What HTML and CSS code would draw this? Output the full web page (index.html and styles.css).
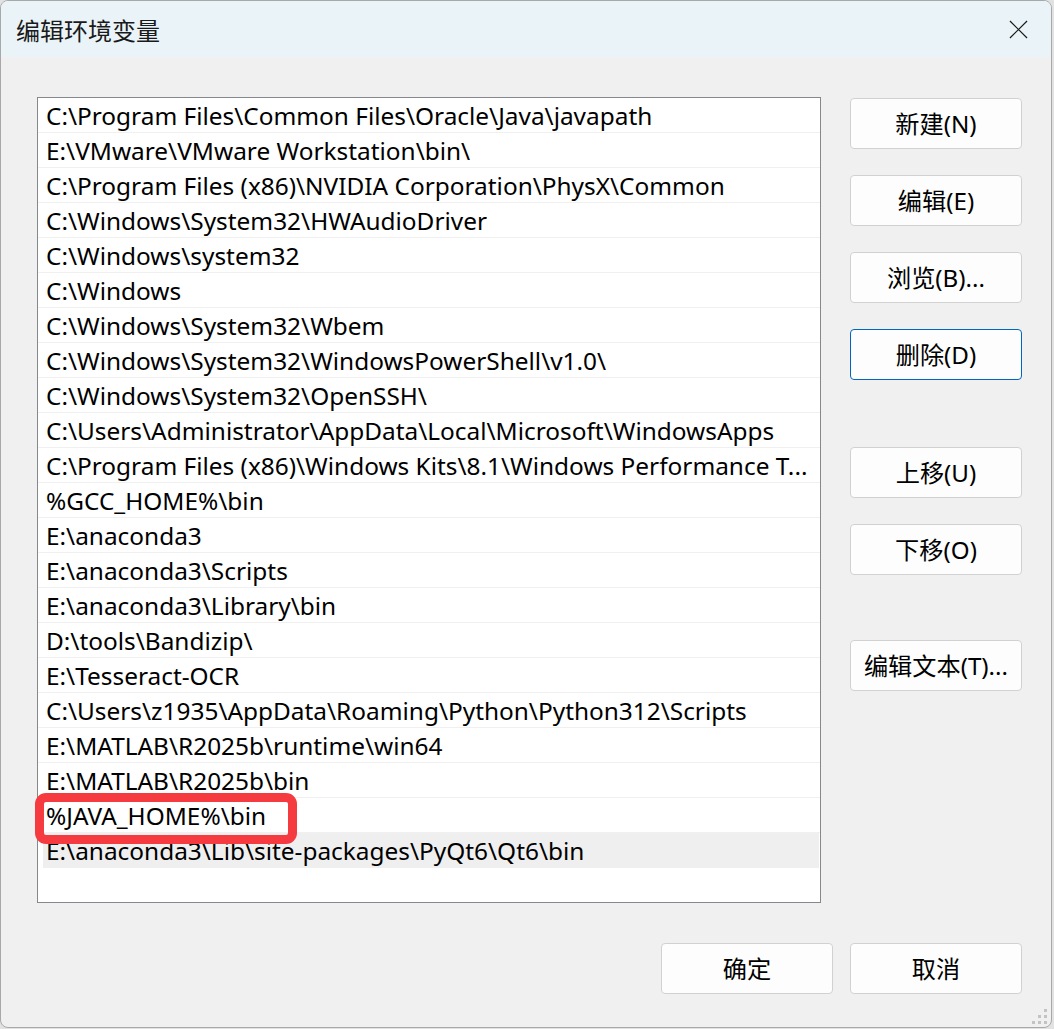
FILE: index.html
```html
<!DOCTYPE html>
<html lang="zh-CN">
<head>
<meta charset="utf-8">
<title>编辑环境变量</title>
<link rel="stylesheet" href="styles.css">
</head>
<body>
<div class="window">
  <div class="titlebar">
    <span class="title">编辑环境变量</span>
    <svg class="close" viewBox="0 0 20 20" aria-label="关闭"><path d="M1 1L19 19M19 1L1 19" stroke="#1b1b1b" stroke-width="1.3" fill="none"/></svg>
  </div>
  <div class="content">
    <div class="list">
      <div class="row">C:\Program Files\Common Files\Oracle\Java\javapath</div>
      <div class="row">E:\VMware\VMware Workstation\bin\</div>
      <div class="row">C:\Program Files (x86)\NVIDIA Corporation\PhysX\Common</div>
      <div class="row">C:\Windows\System32\HWAudioDriver</div>
      <div class="row">C:\Windows\system32</div>
      <div class="row">C:\Windows</div>
      <div class="row">C:\Windows\System32\Wbem</div>
      <div class="row">C:\Windows\System32\WindowsPowerShell\v1.0\</div>
      <div class="row">C:\Windows\System32\OpenSSH\</div>
      <div class="row">C:\Users\Administrator\AppData\Local\Microsoft\WindowsApps</div>
      <div class="row">C:\Program Files (x86)\Windows Kits\8.1\Windows Performance T...</div>
      <div class="row">%GCC_HOME%\bin</div>
      <div class="row">E:\anaconda3</div>
      <div class="row">E:\anaconda3\Scripts</div>
      <div class="row">E:\anaconda3\Library\bin</div>
      <div class="row">D:\tools\Bandizip\</div>
      <div class="row">E:\Tesseract-OCR</div>
      <div class="row">C:\Users\z1935\AppData\Roaming\Python\Python312\Scripts</div>
      <div class="row">E:\MATLAB\R2025b\runtime\win64</div>
      <div class="row">E:\MATLAB\R2025b\bin</div>
      <div class="row">%JAVA_HOME%\bin</div>
      <div class="row selected">E:\anaconda3\Lib\site-packages\PyQt6\Qt6\bin</div>
      <div class="highlight"></div>
    </div>
    <div class="side">
      <div class="group">
        <div class="btn">新建(N)</div>
        <div class="btn">编辑(E)</div>
        <div class="btn">浏览(B)...</div>
        <div class="btn focused">删除(D)</div>
      </div>
      <div class="group move">
        <div class="btn">上移(U)</div>
        <div class="btn">下移(O)</div>
      </div>
      <div class="group text">
        <div class="btn">编辑文本(T)...</div>
      </div>
    </div>
    <div class="footer">
      <div class="btn">确定</div>
      <div class="btn">取消</div>
    </div>
  </div>
  <div class="grip">
    <span class="dot d1"></span>
    <span class="dot d2"></span><span class="dot d3"></span>
    <span class="dot d4"></span><span class="dot d5"></span><span class="dot d6"></span>
  </div>
</div>
</body>
</html>
```
FILE: styles.css
```css
html, body {
  margin: 0;
  padding: 0;
}
body {
  background: #e2e2e2;
  font-family: "Noto Sans", "Noto Sans CJK SC", sans-serif;
  color: #000;
}
.window {
  position: relative;
  width: 1050px;
  height: 1026px;
  border: 1px solid #a8a8a8;
  border-radius: 8px;
  background: #f0f0f0;
  overflow: hidden;
  display: flex;
  flex-direction: column;
}
.titlebar {
  height: 56px;
  flex: none;
  background: #eaf4f8;
  display: flex;
  align-items: center;
  justify-content: space-between;
  padding: 0 23px 0 15px;
}
.title {
  font-family: "Noto Sans CJK SC", sans-serif;
  font-size: 24px;
  line-height: 30px;
  color: #1a1a1a;
  margin-top: 1px;
}
.close {
  width: 19px;
  height: 19px;
  margin-top: 1px;
}
.content {
  display: grid;
  grid-template-columns: 784px 172px;
  grid-template-rows: 806px 51px;
  column-gap: 29px;
  row-gap: 40px;
  padding: 40px 0 0 36px;
}
.list {
  position: relative;
  background: #fff;
  border: 1px solid #85888c;
  box-sizing: border-box;
}
.row {
  height: 34px;
  border-bottom: 1px solid #f0f0f0;
  padding-left: 8px;
  line-height: 36px;
  font-size: 24.4px;
  white-space: nowrap;
  overflow: hidden;
  color: #000;
}
.row.selected {
  background: #efefef;
  margin-left: 5px;
  margin-right: 1px;
  padding-left: 3px;
  border-bottom-color: transparent;
}
.highlight {
  position: absolute;
  left: -3px;
  top: 695px;
  width: 262px;
  height: 51px;
  box-sizing: border-box;
  border: 9px solid #f53b40;
  border-radius: 11px;
}
.side {
  display: flex;
  flex-direction: column;
  padding-top: 1px;
}
.group {
  display: flex;
  flex-direction: column;
  gap: 26px;
}
.group.move {
  margin-top: 67px;
}
.group.text {
  margin-top: 65px;
}
.btn {
  height: 51px;
  box-sizing: border-box;
  border: 1px solid #d1d1d1;
  border-radius: 4px;
  background: #fdfdfd;
  font-size: 24.2px;
  line-height: 30px;
  display: flex;
  align-items: center;
  justify-content: center;
  color: #000;
}
.btn.focused {
  border-color: #0067c0;
}
.footer {
  grid-column: 1 / -1;
  display: flex;
  justify-content: flex-end;
  gap: 17px;
}
.footer .btn {
  width: 172px;
}
.grip {
  position: absolute;
  right: 3px;
  bottom: 3px;
  width: 16px;
  height: 16px;
}
.dot {
  position: absolute;
  width: 3px;
  height: 3px;
  background: #c3c3c3;
}
.d1 { right: 1px; top: 1px; }
.d2 { right: 7px; top: 7px; }
.d3 { right: 1px; top: 7px; }
.d4 { right: 13px; top: 13px; }
.d5 { right: 7px; top: 13px; }
.d6 { right: 1px; top: 13px; }
```
